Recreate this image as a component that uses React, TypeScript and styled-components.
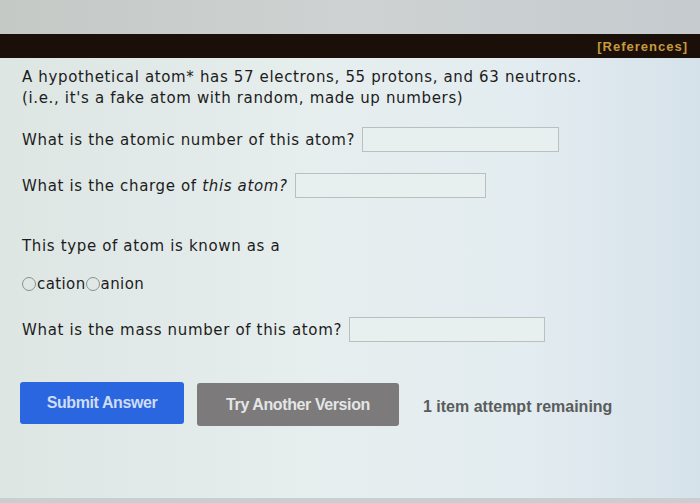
import React from "react";
import styled, { createGlobalStyle } from "styled-components";

const Global = createGlobalStyle`
  html, body {
    margin: 0;
    padding: 0;
    width: 700px;
    height: 503px;
    overflow: hidden;
  }
`;

const Page = styled.div`
  width: 700px;
  height: 503px;
  display: flex;
  flex-direction: column;
  background: linear-gradient(90deg, #dde6e3 0%, #e6eeee 45%, #e3ecf0 75%, #d6e2ea 100%);
  font-family: "DejaVu Sans", Verdana, sans-serif;
  color: #1c1c1c;
`;

const TopStrip = styled.div`
  height: 34px;
  background: linear-gradient(90deg, #c4c9c6, #ced2d2 50%, #c5cbcf);
`;

const DarkBar = styled.div`
  height: 24px;
  background: #1b0f0a;
  display: flex;
  align-items: center;
  justify-content: flex-end;
  padding-right: 12px;
`;

const RefLink = styled.span`
  font-family: "Liberation Sans", Arial, sans-serif;
  font-weight: bold;
  font-size: 13px;
  color: #c79a3c;
  letter-spacing: 1px;
`;

const Content = styled.div`
  flex: 1;
  padding: 9px 0 0 22px;
  display: flex;
  flex-direction: column;
  font-size: 15px;
  letter-spacing: 0.65px;
`;

const Intro = styled.p`
  margin: 0;
  line-height: 21px;
`;

const Question = styled.div<{ $top: number }>`
  display: flex;
  align-items: center;
  gap: 7px;
  margin-top: ${(p) => p.$top}px;
  height: 25px;
`;

const Answer = styled.div<{ $w: number }>`
  width: ${(p) => p.$w}px;
  height: 25px;
  box-sizing: border-box;
  border: 1px solid #b9c0c0;
  background: #e8f0ef;
`;

const Label = styled.div<{ $top: number }>`
  margin-top: ${(p) => p.$top}px;
  line-height: 20px;
`;

const Choices = styled.div`
  display: flex;
  align-items: center;
  margin-top: 18px;
  height: 20px;
  letter-spacing: 0.4px;
`;

const Choice = styled.label`
  display: flex;
  align-items: center;
`;

const Radio = styled.span`
  width: 12px;
  height: 12px;
  border: 1px solid #8a9090;
  border-radius: 50%;
  margin-right: 1px;
`;

const Actions = styled.div`
  display: flex;
  align-items: center;
  margin-top: 38px;
  margin-left: -2px;
  letter-spacing: normal;
`;

const Button = styled.div<{ $tone: "blue" | "grey" }>`
  width: ${(p) => (p.$tone === "blue" ? 164 : 202)}px;
  height: ${(p) => (p.$tone === "blue" ? 42 : 43)}px;
  border-radius: 3px;
  display: flex;
  align-items: center;
  justify-content: center;
  box-sizing: border-box;
  font-family: "Liberation Sans", Arial, sans-serif;
  font-weight: bold;
  font-size: 16px;
  letter-spacing: -0.4px;
  background: ${(p) => (p.$tone === "blue" ? "#2a66e0" : "#7c7a7a")};
  color: ${(p) => (p.$tone === "blue" ? "#cfdcf5" : "#e4e6e6")};
  margin-right: 13px;
  margin-top: ${(p) => (p.$tone === "blue" ? 0 : 3)}px;
`;

const Remaining = styled.span`
  font-family: "Liberation Sans", Arial, sans-serif;
  font-weight: bold;
  font-size: 16px;
  letter-spacing: 0;
  color: #5a5c5c;
  margin-left: 11px;
  margin-top: 8px;
`;

const BottomEdge = styled.div`
  height: 5px;
  background: #c9cfd0;
`;

export default function App() {
  return (
    <>
      <Global />
      <Page>
        <TopStrip />
        <DarkBar>
          <RefLink>[References]</RefLink>
        </DarkBar>
        <Content>
          <Intro>
            A hypothetical atom* has 57 electrons, 55 protons, and 63 neutrons.
            <br />
            (i.e., it's a fake atom with random, made up numbers)
          </Intro>
          <Question $top={18}>
            <span>What is the atomic number of this atom?</span>
            <Answer $w={197} />
          </Question>
          <Question $top={21}>
            <span>
              What is the charge of <i>this atom?</i>
            </span>
            <Answer $w={191} />
          </Question>
          <Label $top={38}>This type of atom is known as a</Label>
          <Choices>
            <Choice>
              <Radio />
              cation
            </Choice>
            <Choice>
              <Radio />
              anion
            </Choice>
          </Choices>
          <Question $top={23}>
            <span>What is the mass number of this atom?</span>
            <Answer $w={196} />
          </Question>
          <Actions>
            <Button $tone="blue">Submit Answer</Button>
            <Button $tone="grey">Try Another Version</Button>
            <Remaining>1 item attempt remaining</Remaining>
          </Actions>
        </Content>
        <BottomEdge />
      </Page>
    </>
  );
}
